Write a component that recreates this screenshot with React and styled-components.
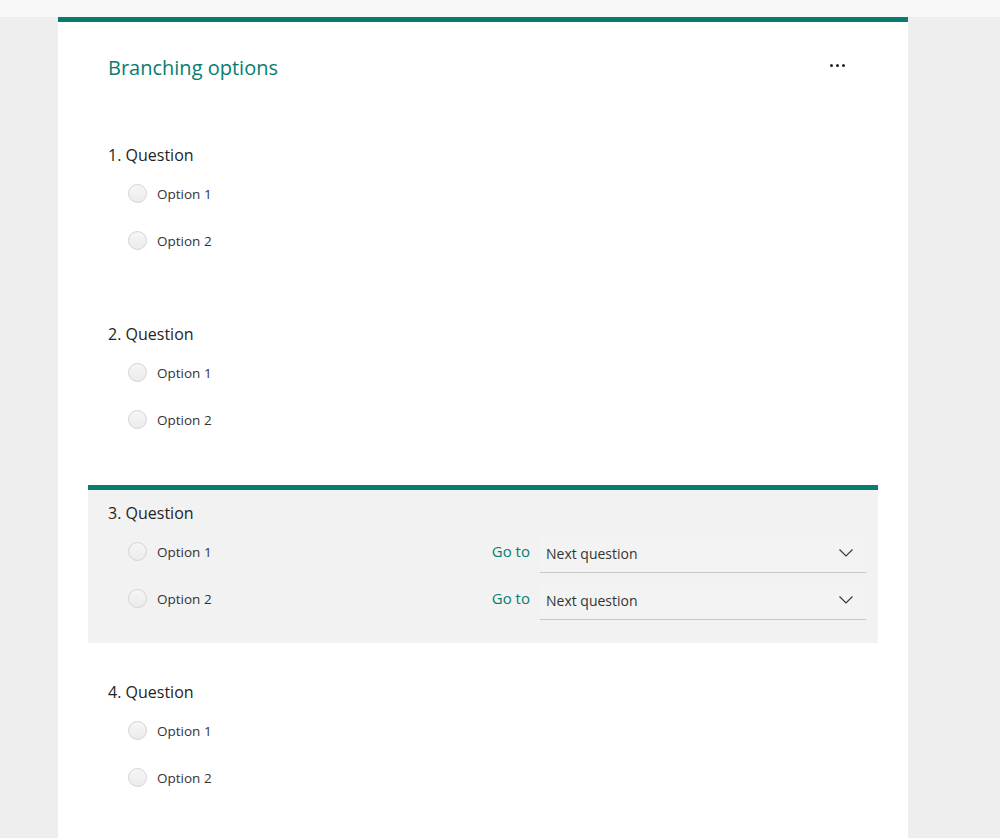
import React from 'react';
import styled, { createGlobalStyle } from 'styled-components';

const GlobalStyle = createGlobalStyle`
  html, body {
    margin: 0;
    padding: 0;
    background: #eeeeee;
    font-family: "Segoe UI", "Open Sans", sans-serif;
  }
`;

const TopStrip = styled.div`
  height: 17px;
  background: #f8f8f8;
`;

const Page = styled.div`
  min-height: 821px;
  background: #eeeeee;
  padding-left: 58px;
`;

const Card = styled.div`
  width: 850px;
  min-height: 821px;
  box-sizing: border-box;
  background: #ffffff;
  border-top: 5px solid #077d6f;
`;

const Header = styled.div`
  display: flex;
  align-items: center;
  justify-content: space-between;
  padding: 32px 50px 0;
  margin-bottom: 45px;
`;

const Title = styled.h1`
  margin: 0;
  font-size: 20px;
  line-height: 28px;
  font-weight: 400;
  color: #077d6f;
`;

const MoreButton = styled.button`
  display: flex;
  align-items: center;
  gap: 3px;
  padding: 0;
  margin: -6px 13px 0 0;
  border: none;
  background: none;
  cursor: pointer;
`;

const Dot = styled.span`
  width: 3px;
  height: 3px;
  border-radius: 50%;
  background: #252424;
`;

const Block = styled.div`
  margin: 0 30px 21px;
  padding: 12px 12px 21px 20px;
  border-top: 5px solid ${(p) => (p.$active ? '#077d6f' : 'transparent')};
  background: ${(p) => (p.$active ? '#f2f2f2' : 'transparent')};
`;

const QuestionTitle = styled.div`
  font-size: 16px;
  line-height: 22px;
  color: #252424;
  margin-bottom: 4px;
`;

const OptionRow = styled.div`
  display: flex;
  align-items: center;
  height: 47px;
  padding-left: 20px;
`;

const Radio = styled.span`
  width: 17px;
  height: 17px;
  flex: none;
  border-radius: 50%;
  border: 1px solid #d4d4d4;
  background: linear-gradient(#f6f6f6, #ebebeb);
  margin-right: 10px;
`;

const OptionLabel = styled.span`
  font-size: 13.5px;
  color: #333333;
  flex: 1;
`;

const GoTo = styled.span`
  font-size: 15px;
  color: #077d6f;
  margin-right: 10px;
  margin-top: -2px;
`;

const Select = styled.div`
  width: 326px;
  height: 38px;
  margin-top: 4px;
  box-sizing: border-box;
  display: flex;
  align-items: center;
  justify-content: space-between;
  padding: 0 13px 0 6px;
  background: #f3f3f3;
  border-bottom: 1px solid #c8c8c8;
  font-size: 14px;
  color: #333333;
`;

const Chevron = () => (
  <svg width="14" height="8" viewBox="0 0 14 8" fill="none">
    <path d="M0.5 0.5 L7 7 L13.5 0.5" stroke="#333" strokeWidth="1.1" />
  </svg>
);

const questions = [
  { id: 1 },
  { id: 2 },
  { id: 3, active: true },
  { id: 4 },
];

const App = () => (
  <>
    <GlobalStyle />
    <TopStrip />
    <Page>
      <Card>
        <Header>
          <Title>Branching options</Title>
          <MoreButton aria-label="More options">
            <Dot />
            <Dot />
            <Dot />
          </MoreButton>
        </Header>
        {questions.map((q) => (
          <Block key={q.id} $active={q.active}>
            <QuestionTitle>{q.id}. Question</QuestionTitle>
            {['Option 1', 'Option 2'].map((opt) => (
              <OptionRow key={opt}>
                <Radio />
                <OptionLabel>{opt}</OptionLabel>
                {q.active && (
                  <>
                    <GoTo>Go to</GoTo>
                    <Select>
                      Next question
                      <Chevron />
                    </Select>
                  </>
                )}
              </OptionRow>
            ))}
          </Block>
        ))}
      </Card>
    </Page>
  </>
);

export default App;
